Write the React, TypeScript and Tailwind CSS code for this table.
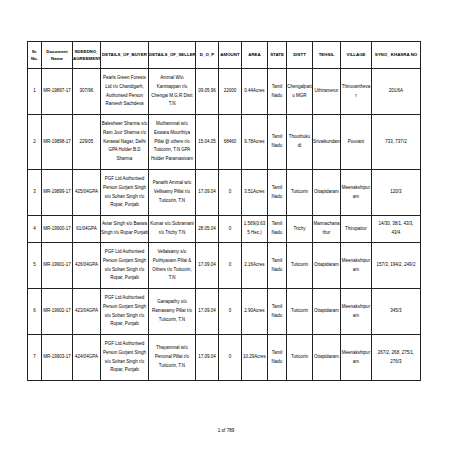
const cols = [14, 31, 28, 48, 47, 23, 23, 26, 19, 26, 28, 31, 49];

const header = [
  ["Sr.", "No."],
  ["Document", "Name"],
  ["SDEEDNO_", "AGREEMENT"],
  ["DETAILS_OF_BUYER"],
  ["DETAILS_OF_SELLER"],
  ["D_O_P"],
  ["AMOUNT"],
  ["AREA"],
  ["STATE"],
  ["DISTT"],
  ["TEHSIL"],
  ["VILLAGE"],
  ["SYNO_ KHASRA NO"],
];

const pgf = ["PGF Ltd Authorised", "Person Gurjant Singh", "s/o Sohan Singh r/o", "Ropar, Punjab"];
const tn = ["Tamil", "Nadu"];

const rows: { h: number; cells: string[][] }[] = [
  {
    h: 46,
    cells: [
      ["1"], ["MR-19897-17"], ["307/96"],
      ["Pearls Green Forests", "Ltd r/o Chandigarh,", "Authorised Person", "Ramesh Sachdeva"],
      ["Ammal W/o", "Kanniappan r/o", "Chengai M.G.R Distt", "T.N"],
      ["09.05.96"], ["22000"], ["0.44Acres"], tn, ["Chengalpatt", "u MGR"], ["Uthiramerur"],
      ["Thiruvantheva", "r"], ["201/6A"],
    ],
  },
  {
    h: 55,
    cells: [
      ["2"], ["MR-19898-17"], ["229/05"],
      ["Baleshwer Sharma s/o", "Ram Jour Sharma r/o", "Kerawal Nagar, Delhi", "GPA Holder B.D", "Sharma"],
      ["Muthammal w/o", "Eswara Moorthiya", "Pillai @ others r/o", "Tuticorin, T.N GPA", "Holder Paramasivam"],
      ["15.04.05"], ["68460"], ["9.78Acres"], tn, ["Thoothuku", "di"], ["Srivaikundam"],
      ["Poovani"], ["733, 737/2"],
    ],
  },
  {
    h: 46,
    cells: [
      ["3"], ["MR-19899-17"], ["425/04GPA"], pgf,
      ["Panathi Ammal w/o", "Vellisamy Pillai r/o", "Tuticorin, T.N"],
      ["17.09.04"], ["0"], ["3.51Acres"], tn, ["Tuticorin"], ["Ottapidaram"],
      ["Meenakshipur", "am"], ["120/3"],
    ],
  },
  {
    h: 27,
    cells: [
      ["4"], ["MR-19900-17"], ["61/04GPA"],
      ["Avtar Singh s/o Baswa", "Singh r/o Ropar Punjab"],
      ["Kumar s/o Subramani", "r/o Trichy T.N"],
      ["28.05.04"], ["0"], ["1.569(0.63", "5 Hec.)"], tn, ["Trichy"], ["Mannachana", "thur"],
      ["Thirupattur"], ["14/30, 38/1, 43/3,", "43/4"],
    ],
  },
  {
    h: 46,
    cells: [
      ["5"], ["MR-19901-17"], ["426/04GPA"], pgf,
      ["Vellaisamy s/o", "Puthiyavam Pillai &", "Others r/o Tuticorin,", "T.N"],
      ["17.09.04"], ["0"], ["2.16Acres"], tn, ["Tuticorin"], ["Ottapidaram"],
      ["Meenakshipur", "am"], ["157/3, 194/2, 249/2"],
    ],
  },
  {
    h: 46,
    cells: [
      ["6"], ["MR-19902-17"], ["423/04GPA"], pgf,
      ["Ganapathy s/o", "Ramasamy Pillai r/o", "Tuticorin, T.N"],
      ["17.09.04"], ["0"], ["2.90Acres"], tn, ["Tuticorin"], ["Ottapidaram"],
      ["Meenakshipur", "am"], ["345/3"],
    ],
  },
  {
    h: 46,
    cells: [
      ["7"], ["MR-19903-17"], ["424/04GPA"], pgf,
      ["Thayammal w/o", "Perumal Pillai r/o", "Tuticorin, T.N"],
      ["17.09.04"], ["0"], ["10.29Acres"], tn, ["Tuticorin"], ["Ottapidaram"],
      ["Meenakshipur", "am"], ["267/2, 268, 275/1,", "276/3"],
    ],
  },
];

function Lines({ lines }: { lines: string[] }) {
  return (
    <>
      {lines.map((l, i) => (
        <div key={i} className="whitespace-nowrap">
          {l}
        </div>
      ))}
    </>
  );
}

export default function App() {
  return (
    <div className="w-[452px] h-[452px] bg-white text-black font-['Liberation_Sans',Arial,sans-serif] overflow-hidden">
      <div className="pt-[41px] pl-[27px]">
        <table className="table-fixed border-collapse w-[393px]">
          <colgroup>
            {cols.map((w, i) => (
              <col key={i} style={{ width: w }} />
            ))}
          </colgroup>
          <thead>
            <tr className="h-[27px]">
              {header.map((c, i) => (
                <th
                  key={i}
                  className="border border-[#222] text-[4.4px] leading-[7.5px] font-bold text-center align-middle p-0 overflow-hidden"
                >
                  <Lines lines={c} />
                </th>
              ))}
            </tr>
          </thead>
          <tbody>
            {rows.map((r, ri) => (
              <tr key={ri} style={{ height: r.h }}>
                {r.cells.map((c, ci) => (
                  <td
                    key={ci}
                    className="border border-[#222] text-[4.5px] leading-[8.7px] text-center align-middle p-0 overflow-hidden"
                  >
                    <Lines lines={c} />
                  </td>
                ))}
              </tr>
            ))}
          </tbody>
        </table>
      </div>
      <div className="mt-[47px] text-center text-[4.6px] leading-[6px]">1 of 789</div>
    </div>
  );
}
